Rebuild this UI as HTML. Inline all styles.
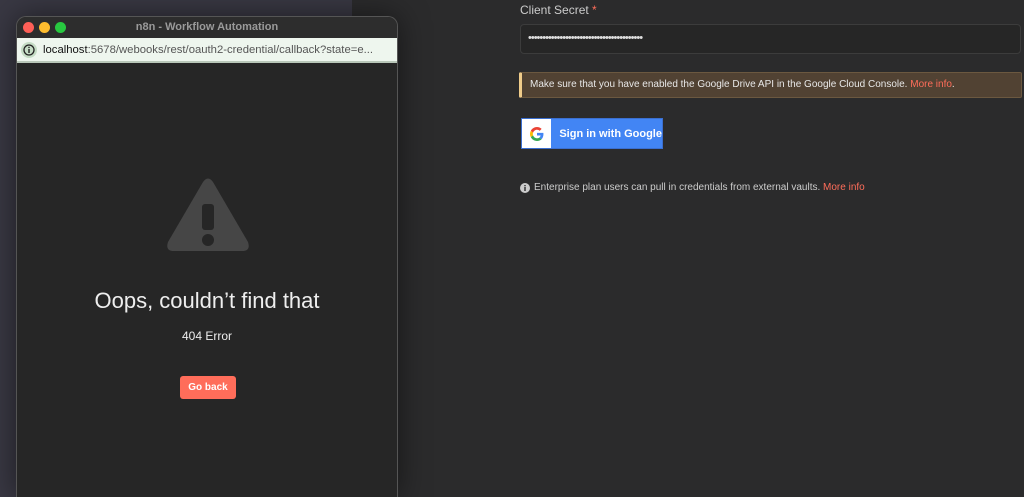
<!DOCTYPE html>
<html><head><meta charset="utf-8"><style>
*{margin:0;padding:0;box-sizing:border-box}
html,body{width:1024px;height:497px;overflow:hidden}
body{background:#2b2b2c;font-family:"Liberation Sans",sans-serif;position:relative}
.leftbg{position:absolute;left:0;top:0;width:352px;height:497px;background:#393843}
.win{position:absolute;left:16px;top:16px;width:382px;height:481px;border-radius:10px 10px 0 0;background:#262626;border:1px solid #555;border-bottom:none;overflow:hidden;box-shadow:0 0 30px rgba(0,0,0,.5)}
.title{height:21px;background:#2d2d2d;color:#9a9a9a;font-size:11px;font-weight:bold;text-align:center;line-height:21px;position:relative}
.dot{position:absolute;top:5px;width:11px;height:11px;border-radius:50%}
.url{height:25px;background:#eef6ee;border-bottom:2px solid #b9c7b9;display:flex;align-items:center;font-size:11.3px;color:#555;white-space:nowrap}
.url b{font-weight:normal;color:#111}
.ic{width:16px;height:16px;border-radius:50%;background:#c5dcc5;margin:0 6px 0 4px;display:flex;align-items:center;justify-content:center}
.c{position:absolute;width:100%;text-align:center;color:#eee}
.r{position:absolute;left:520px;color:#ccc}
a{color:#ff6d5a;text-decoration:none}
</style></head><body>
<div class="leftbg"></div>
<div class="win">
 <div class="title"><span class="dot" style="left:6px;background:#fe5f57"></span><span class="dot" style="left:22px;background:#febc2e"></span><span class="dot" style="left:38px;background:#28c840"></span>n8n - Workflow Automation</div>
 <div class="url"><div class="ic"><svg width="12" height="12" viewBox="0 0 12 12"><circle cx="6" cy="6" r="5" fill="none" stroke="#222" stroke-width="1.3"/><rect x="5.3" y="5" width="1.4" height="4" fill="#222"/><rect x="5.3" y="2.8" width="1.4" height="1.3" fill="#222"/></svg></div><b>localhost</b>:5678/webooks/rest/oauth2-credential/callback?state=e...</div>
 <svg style="position:absolute;left:149px;top:161px" width="84" height="74" viewBox="0 0 84 74"><path d="M37 4 Q42 -3 47 4 L82 64 Q85 73 76 73 L8 73 Q-1 73 2 64 Z" fill="#464646"/><rect x="36" y="26" width="12" height="26" rx="3" fill="#262626"/><circle cx="42" cy="62" r="6" fill="#262626"/></svg>
 <div class="c" style="top:271px;font-size:22px">Oops, couldn’t find that</div>
 <div class="c" style="top:312px;font-size:12px">404 Error</div>
 <div style="position:absolute;left:163px;top:359px;width:56px;height:23px;background:#ff6d5a;border-radius:3px;color:#fff;font-size:10px;font-weight:bold;text-align:center;line-height:23px">Go back</div>
</div>
<div class="r" style="top:3px;font-size:12px">Client Secret <span style="color:#ff6d5a">*</span></div>
<div style="position:absolute;left:520px;top:24px;width:501px;height:30px;border:1px solid #3c3c3c;border-radius:4px;background:#262626;color:#ddd;font-size:11px;line-height:26px;padding-left:7px;letter-spacing:-1px">••••••••••••••••••••••••••••••••••••••••</div>
<div style="position:absolute;left:519px;top:72px;width:503px;height:26px;background:#514233;border:1px solid #6b5840;border-left:3px solid #f0cc8a;border-radius:2px;color:#e8e8e8;font-size:10px;line-height:24px;padding-left:8px">Make sure that you have enabled the Google Drive API in the Google Cloud Console. <a>More info</a>.</div>
<div style="position:absolute;left:521px;top:118px;width:142px;height:31px;background:#4285f4;border:1px solid #3b6fd0;display:flex;align-items:center;white-space:nowrap">
 <div style="width:30px;height:29px;background:#fff;display:flex;align-items:center;justify-content:center"><svg width="14" height="14" viewBox="0 0 48 48"><path fill="#EA4335" d="M24 9.5c3.5 0 6.6 1.2 9.1 3.6l6.8-6.8C35.8 2.4 30.3 0 24 0 14.6 0 6.6 5.4 2.7 13.3l7.9 6.2C12.5 13.6 17.8 9.5 24 9.5z"/><path fill="#4285F4" d="M46.1 24.5c0-1.6-.1-3.1-.4-4.5H24v9h12.4c-.5 2.9-2.2 5.3-4.6 7l7.6 5.9c4.4-4.1 6.7-10.1 6.7-17.4z"/><path fill="#FBBC05" d="M10.5 28.6c-.5-1.4-.8-3-.8-4.6s.3-3.2.8-4.6l-7.9-6.2C1 16.6 0 20.2 0 24s.9 7.4 2.6 10.8l7.9-6.2z"/><path fill="#34A853" d="M24 48c6.5 0 11.9-2.1 15.9-5.8l-7.6-5.9c-2.1 1.4-4.9 2.3-8.3 2.3-6.2 0-11.5-4.2-13.4-9.9l-7.9 6.2C6.6 42.6 14.6 48 24 48z"/></svg></div>
 <span style="color:#fff;font-size:11px;font-weight:bold;margin-left:8px">Sign in with Google</span></div>
<div class="r" style="top:182px;font-size:10px;display:flex;align-items:center;white-space:nowrap"><svg width="10" height="10" viewBox="0 0 10 10" style="margin-right:4px"><circle cx="5" cy="5" r="5" fill="#ccc"/><rect x="4.3" y="4" width="1.4" height="4" fill="#2b2b2c"/><rect x="4.3" y="2" width="1.4" height="1.3" fill="#2b2b2c"/></svg>Enterprise plan users can pull in credentials from external vaults.&nbsp;<a>More info</a></div>
</body></html>
